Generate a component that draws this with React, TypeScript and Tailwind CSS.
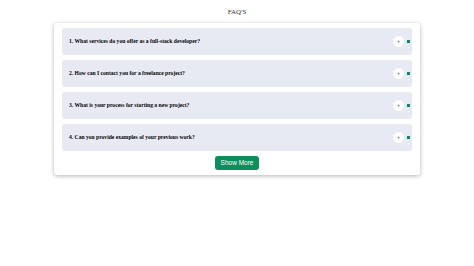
const faqs = [
  "1. What services do you offer as a full-stack developer?",
  "2. How can I contact you for a freelance project?",
  "3. What is your process for starting a new project?",
  "4. Can you provide examples of your previous work?",
];

function FaqItem({ question }: { question: string }) {
  return (
    <div className="flex h-[27px] items-center justify-between rounded-[3px] bg-[#e8eaf3] pl-[7px] pr-[2px]">
      <span className="text-[5.6px] font-bold text-black">{question}</span>
      <div className="flex items-center gap-[3px]">
        <span className="flex h-[11px] w-[11px] items-center justify-center rounded-full bg-white font-['Liberation_Sans',sans-serif] text-[5px] font-bold leading-none text-[#777]">
          +
        </span>
        <span className="h-[3px] w-[3px] bg-[#0c8a5c]" />
      </div>
    </div>
  );
}

export default function App() {
  return (
    <div className="min-h-[266px] w-full bg-white pt-[8px] font-['Liberation_Serif',serif]">
      <h1 className="text-center text-[7px] leading-[9px] text-[#333]">FAQ'S</h1>
      <div className="mx-auto mt-[6px] w-[366px] rounded-[3px] bg-white px-[8px] pb-[5px] pt-[5px] shadow-[0_1px_4px_rgba(0,0,0,0.3)]">
        <div className="flex flex-col gap-[5px]">
          {faqs.map((q) => (
            <FaqItem key={q} question={q} />
          ))}
        </div>
        <div className="mt-[5px] flex justify-center">
          <button className="h-[14px] w-[44px] rounded-[3px] bg-[#0c8f5a] font-['Liberation_Sans',sans-serif] text-[6.5px] text-white">
            Show More
          </button>
        </div>
      </div>
    </div>
  );
}
